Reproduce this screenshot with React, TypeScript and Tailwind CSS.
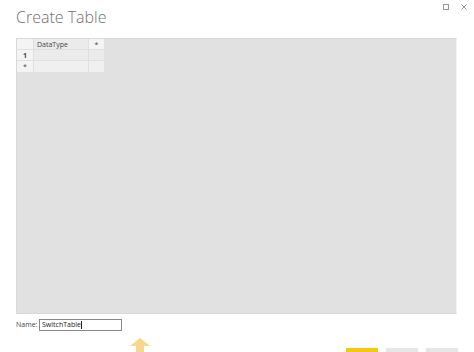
import React from "react";

export default function App() {
  const font = { fontFamily: '"Segoe UI", "Open Sans", "Noto Sans", sans-serif' };
  return (
    <div className="w-[474px] h-[352px] bg-white relative overflow-hidden" style={font}>
      {/* window buttons */}
      <div className="absolute top-[4px] left-[443px] flex items-center gap-[12px]">
        <div className="w-[6px] h-[6px] border border-[#999]" />
        <svg width="6" height="6" viewBox="0 0 6 6" stroke="#999" strokeWidth="1">
          <path d="M0.5 0.5 L5.5 5.5 M5.5 0.5 L0.5 5.5" />
        </svg>
      </div>
      <div className="flex flex-col px-[16px]">
        <div className="h-[38px] pt-[6px] text-[16px] leading-[22px] text-[#707070] font-light">Create Table</div>
        <div className="w-[441px] h-[276px] bg-[#e1e1e1] border border-[#d9d9d9] border-r-[#f4f4f4]">
          <div className="grid grid-cols-[17px_55px_15px] grid-rows-[11px_11px_11px] text-[7px] leading-[11px] text-[#444] w-fit">
            <div className="bg-[#f4f4f4] border-r border-b border-[#e0e0e0]" />
            <div className="bg-[#ebebeb] border-r border-b border-[#e0e0e0] pl-[3px]">DataType</div>
            <div className="bg-[#f4f4f4] border-b border-[#e0e0e0] text-center">*</div>
            <div className="bg-[#f4f4f4] border-r border-b border-[#e0e0e0] text-center font-bold">1</div>
            <div className="bg-[#ebebeb] border-r border-b border-[#e0e0e0]" />
            <div className="bg-[#ebebeb] border-b border-[#e0e0e0]" />
            <div className="bg-[#f4f4f4] border-r border-[#e0e0e0] text-center">*</div>
            <div className="bg-[#f0f0f0] border-r border-[#e0e0e0]" />
            <div className="bg-[#f0f0f0]" />
          </div>
        </div>
        <div className="flex items-center mt-[5px] h-[12px]">
          <span className="text-[7px] text-[#444] w-[23px]">Name:</span>
          <div className="w-[83px] h-[12px] border border-[#888] bg-white text-[7px] leading-[10px] pl-[2px] text-[#222] flex items-center">
            SwitchTable<span className="w-px h-[8px] bg-[#222]" />
          </div>
        </div>
      </div>
      {/* arrow */}
      <svg className="absolute left-[129px] top-[337px]" width="22" height="16" viewBox="0 0 22 16">
        <path d="M11 1 L21 9 L15 9 L15 16 L7 16 L7 9 L1 9 Z" fill="#f7d88a" />
      </svg>
      {/* bottom buttons */}
      <div className="absolute left-[346px] top-[348px] flex gap-[8px]">
        <div className="w-[32px] h-[6px] bg-[#f2c811]" />
        <div className="w-[32px] h-[6px] bg-[#e6e6e6]" />
        <div className="w-[32px] h-[6px] bg-[#e6e6e6]" />
      </div>
    </div>
  );
}
